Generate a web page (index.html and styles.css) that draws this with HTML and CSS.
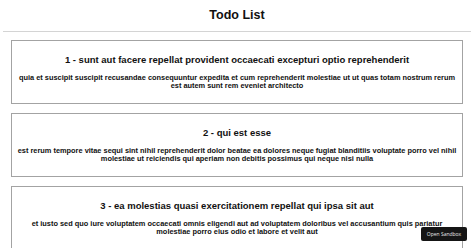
FILE: index.html
```html
<!DOCTYPE html>
<html>
<head>
<meta charset="utf-8">
<link rel="stylesheet" href="styles.css">
</head>
<body>
<header class="header">
  <h1 class="header-title">Todo List</h1>
</header>
<main class="list">
  <section class="item">
    <h3 class="item-title">1 - sunt aut facere repellat provident occaecati excepturi optio reprehenderit</h3>
    <p class="item-body">quia et suscipit suscipit recusandae consequuntur expedita et cum reprehenderit molestiae ut ut quas totam nostrum rerum est autem sunt rem eveniet architecto</p>
  </section>
  <section class="item">
    <h3 class="item-title">2 - qui est esse</h3>
    <p class="item-body">est rerum tempore vitae sequi sint nihil reprehenderit dolor beatae ea dolores neque fugiat blanditiis voluptate porro vel nihil molestiae ut reiciendis qui aperiam non debitis possimus qui neque nisi nulla</p>
  </section>
  <section class="item">
    <h3 class="item-title">3 - ea molestias quasi exercitationem repellat qui ipsa sit aut</h3>
    <p class="item-body">et iusto sed quo iure voluptatem occaecati omnis eligendi aut ad voluptatem doloribus vel accusantium quis pariatur molestiae porro eius odio et labore et velit aut</p>
  </section>
</main>
<a class="sandbox-btn">Open Sandbox</a>
</body>
</html>
```
FILE: styles.css
```css
html, body {
  margin: 0;
  padding: 0;
  background: #ffffff;
  font-family: "Liberation Sans", Arial, sans-serif;
  color: #111111;
  overflow: hidden;
}
.header {
  margin: 0 3px;
  padding: 8px 0 8px;
  border-bottom: 1px solid #d4d4d4;
  text-align: center;
}
.header-title {
  margin: 0;
  font-size: 12.5px;
  line-height: 15px;
  font-weight: bold;
}
.list {
  padding: 8px 11px 0;
  display: flex;
  flex-direction: column;
  gap: 9px;
}
.item {
  border: 1px solid #a3a3a3;
  padding: 13px 5px 12.5px;
  text-align: center;
}
.item-title {
  margin: 0;
  font-size: 9.5px;
  line-height: 12px;
  font-weight: bold;
}
.item-body {
  margin: 7.5px 0 0;
  font-size: 7.4px;
  line-height: 8.5px;
  font-weight: bold;
}
.sandbox-btn {
  position: fixed;
  right: 7px;
  bottom: 7px;
  width: 46px;
  height: 14px;
  background: #151515;
  color: #e8e8e8;
  border-radius: 2px;
  font-family: "Open Sans", sans-serif;
  font-size: 5px;
  line-height: 14px;
  text-align: center;
}
```
